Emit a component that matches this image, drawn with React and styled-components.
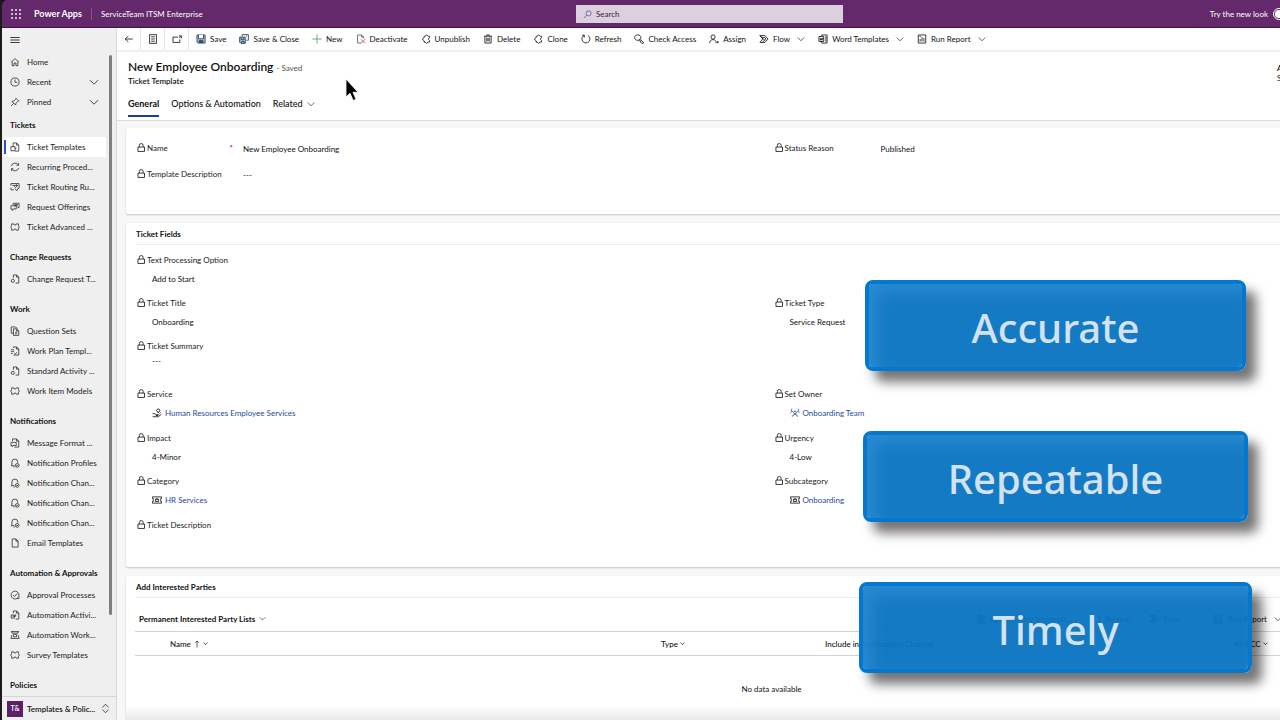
import { useState } from "react";
import styled, { createGlobalStyle } from "styled-components";

const GlobalStyle = createGlobalStyle`
  * {
    box-sizing: border-box;
  }
  body {
    margin: 0;
    overflow: hidden;
    font-family: Lato, "Noto Sans", sans-serif;
    font-size: 8px;
    line-height: 12px;
    color: #111;
    background-color: #111;
  }
  button, input {
    font: inherit;
    color: inherit;
  }
  h1, h2, h3, dl, dd, ul {
    margin: 0;
    padding: 0;
  }
`;

const Viewport = styled.div`
  position: relative;
  height: 100vh;
  overflow: hidden;
`;

/* the app window is a bit wider than the visible area */
const Shell = styled.div`
  width: 110vw;
  height: 100%;
  display: flex;
  flex-direction: column;
  border-left: 2px solid #1c1c1c;
`;

const TopBar = styled.header`
  flex: none;
  height: 28px;
  padding: 1px 0 0 9px;
  display: grid;
  grid-template-columns: 1fr 267px 1fr;
  align-items: center;
  background-color: #64296b;
  border-bottom: 1px solid #43114a;
  border-top-left-radius: 5px;
  color: white;
`;

const Brand = styled.div`
  display: flex;
  align-items: center;
  font-size: 8px;
`;

const AppName = styled.span`
  margin-left: 13px;
  padding-right: 9px;
  margin-right: 9px;
  border-right: 1px solid #86558c;
  font-size: 9px;
  font-weight: 700;
`;

const IconButton = styled.button`
  display: flex;
  align-items: center;
  justify-content: center;
  padding: 0;
  border: none;
  background: none;
  cursor: pointer;
`;

const SearchBox = styled.label`
  display: flex;
  align-items: center;
  gap: 4px;
  height: 18px;
  padding-left: 7px;
  background-color: #dccfde;
  color: #4a4fa8;

  input {
    flex: 1;
    border: none;
    padding: 0;
    background: none;
    outline: none;
    font-size: 8px;
    color: #3b2340;
  }
  input::placeholder {
    color: #3b2340;
    opacity: 1;
  }
`;

const NewLook = styled.label`
  display: flex;
  align-items: center;
  justify-content: flex-end;
  gap: 5px;
  padding-right: 110px;
`;

const Toggle = styled.input`
  appearance: none;
  display: flex;
  align-items: center;
  width: 25px;
  height: 12px;
  margin: 0;
  padding: 1px;
  border: 1px solid white;
  border-radius: 6px;

  &::before {
    content: "";
    width: 8px;
    height: 8px;
    border-radius: 50%;
    background-color: white;
  }
`;

const Body = styled.div`
  flex: 1;
  min-height: 0;
  display: flex;
`;

const Sidebar = styled.nav`
  flex: none;
  width: 115px;
  display: flex;
  flex-direction: column;
  background-color: #efefef;
  border-right: 1px solid #d8d8d8;
`;

const MenuButton = styled(IconButton)`
  width: 26px;
  height: 24px;
`;

const NavScroll = styled.div`
  flex: 1;
  min-height: 0;
  display: flex;
  justify-content: space-between;
  overflow: hidden;
`;

const NavList = styled.ul`
  width: 102px;
  margin-left: 2px;
  list-style: none;
`;

const GroupList = styled.ul`
  list-style: none;
`;

const Thumb = styled.div`
  width: 3px;
  height: 87%;
  margin: 3px 4px 0 0;
  border-radius: 2px;
  background-color: #7f7f7f;
`;

const NavHeading = styled.h2`
  height: ${(props) => (props.$first ? 25 : 32)}px;
  padding: ${(props) => (props.$first ? 7 : 14)}px 0 0 6px;
  font-size: 8px;
  font-weight: 700;
  line-height: 12px;
  white-space: nowrap;
`;

const NavLink = styled.a`
  display: flex;
  align-items: center;
  gap: 7px;
  height: 20px;
  padding-left: 4px;
  padding-right: 7px;
  border-left: 2px solid transparent;
  color: #222;
  text-decoration: none;
  background-color: ${(props) => (props.$active ? "white" : "transparent")};
  border-image: ${(props) =>
    props.$active
      ? "linear-gradient(white 20%, #2b50c8 20%, #2b50c8 80%, white 80%) 1"
      : "none"};

  span {
    flex: 1;
    white-space: nowrap;
  }
`;

const AreaSwitch = styled.button`
  display: flex;
  align-items: center;
  gap: 4px;
  height: 24px;
  padding: 0 0 0 5px;
  border: none;
  border-top: 1px solid #d6d6d6;
  background: none;
  font-weight: 600;
  white-space: nowrap;
`;

const AreaTile = styled.span`
  width: 16px;
  height: 16px;
  background-color: #5c2069;
  color: white;
  font-size: 7px;
  line-height: 15px;
`;

const AreaLabel = styled.span`
  width: 70px;
  text-align: left;
`;

const Main = styled.main`
  flex: 1;
  min-width: 0;
  display: flex;
  flex-direction: column;
  background-color: #f8f7f6;
`;

const CommandBar = styled.div`
  flex: none;
  display: flex;
  height: 24px;
  background-color: white;
  border-bottom: 2px solid #efefef;
`;

const SquareCommand = styled(IconButton)`
  width: 24px;
  border-right: 1px solid #e4e4e4;
`;

const Command = styled.button`
  display: flex;
  align-items: center;
  gap: 4px;
  padding: 0 6px 0 7px;
  border: none;
  background: none;
  white-space: nowrap;
  cursor: pointer;

  svg + span + svg {
    margin-left: 3px;
  }
`;

const RecordHeader = styled.section`
  flex: none;
  height: 69px;
  padding: 7px 0 0 11px;
  background-color: white;
  border-bottom: 1px solid #dcdcdc;
`;

const RecordTop = styled.div`
  display: flex;
  justify-content: space-between;
`;

const RecordTitle = styled.h1`
  font-size: 12px;
  font-weight: 600;
  line-height: 15px;
  color: #111;

  small {
    font-size: 8px;
    font-weight: 400;
    color: #555;
  }
`;

const RecordKind = styled.div`
  font-weight: 600;
  line-height: 10px;
`;

const HeaderStatus = styled.div`
  width: 131px;
  padding-top: 4px;
  line-height: 10px;

  strong {
    display: block;
    font-weight: 600;
  }
`;

const Tabs = styled.div`
  display: flex;
  gap: 12px;
  margin-top: 9px;
`;

const Tab = styled.button`
  display: flex;
  align-items: center;
  gap: 4px;
  height: 22px;
  padding: 0 0 3px;
  border: none;
  border-bottom: 2px solid ${(props) => (props.$active ? "#173f9f" : "transparent")};
  background: none;
  font-size: 9px;
  font-weight: ${(props) => (props.$active ? 700 : 500)};
`;

const Form = styled.div`
  flex: 1;
  min-height: 0;
  display: flex;
  flex-direction: column;
  gap: 9px;
  padding: 7px 0 0 9px;
`;

const Card = styled.section`
  flex: ${(props) => (props.$fill ? "1" : "none")};
  padding-left: 9px;
  padding-bottom: ${(props) => props.$bottom || 0}px;
  background: ${(props) =>
    props.$fill
      ? "linear-gradient(to top, #e6e6e6, white 16px)"
      : "white"};
  border-radius: 2px;
  box-shadow: 0 1px 2px rgba(0, 0, 0, 0.2);
`;

const CardTitle = styled.h2`
  height: 22px;
  margin-left: 1px;
  border-bottom: 1px solid #ececec;
  font-size: 8px;
  font-weight: 700;
  line-height: 22px;
`;

const FieldGrid = styled.dl`
  display: grid;
  grid-template-columns: 1fr 1fr;
  column-gap: 4px;
  padding: ${(props) => props.$top}px 0 0 2px;
`;

const InlineField = styled.div`
  grid-column: ${(props) => props.$col || 1};
  display: flex;
  align-items: center;
  height: 26px;

  dt {
    display: flex;
    align-items: center;
    width: 106px;
    padding-right: 10px;
    color: #222;
  }
  dd {
    padding-top: 2px;
  }
  em {
    margin-left: auto;
    color: #c4262e;
    font-style: normal;
    font-weight: 700;
  }
`;

const fieldHeights = { text: 43, empty: 48, link: 44 };

const StackedField = styled.div`
  grid-column: ${(props) => props.$col || 1};
  height: ${(props) => fieldHeights[props.$kind]}px;

  dt {
    display: flex;
    align-items: center;
    height: 18px;
    color: #222;
  }
  dd {
    display: flex;
    align-items: center;
    gap: 3px;
    height: ${(props) => (props.$kind === "empty" ? 12 : 20)}px;
    padding-left: 15px;
  }
  a {
    color: #1e4a9c;
    text-decoration: none;
  }
`;

const GridBar = styled.div`
  display: flex;
  align-items: center;
  justify-content: space-between;
  height: 33px;
  padding: 8px 120px 0 4px;
`;

const ViewPicker = styled.button`
  display: flex;
  align-items: center;
  gap: 4px;
  padding: 0;
  border: none;
  background: none;
  font-weight: 700;
`;

const GridCommands = styled.div`
  display: flex;
  gap: 5px;
`;

const PartyTable = styled.table`
  width: 100%;
  table-layout: fixed;
  border-collapse: collapse;

  th {
    height: 24px;
    padding: 0;
    border-top: 1px solid #d4d4d4;
    border-bottom: 1px solid #d4d4d4;
    font-weight: 500;
    text-align: left;
    white-space: nowrap;
  }
  td {
    height: 66px;
    padding: 0;
    text-align: center;
  }
`;

const Sorter = styled.button`
  display: flex;
  align-items: center;
  gap: 2px;
  padding: 0;
  border: none;
  background: none;
  font-weight: 500;
`;

const Callouts = styled.div`
  position: absolute;
  top: 280px;
  right: 28px;
  display: flex;
  flex-direction: column;
  align-items: center;
  gap: 60px;
`;

const Callout = styled.div`
  display: flex;
  align-items: center;
  justify-content: center;
  width: ${(props) => props.$width}px;
  height: 91px;
  padding-top: 4px;
  border: 4px solid #0478cf;
  border-radius: 8px;
  background-color: rgba(8, 115, 193, 0.95);
  background-clip: padding-box;
  box-shadow: 10px 11px 12px rgba(0, 0, 0, 0.55),
    inset 8px 8px 16px rgba(70, 165, 230, 0.4);
  color: #d3e2f1;
  font-family: "Noto Sans", sans-serif;
  font-size: 40px;
  font-weight: 500;
  line-height: 48px;
`;

const Pointer = styled.svg`
  position: absolute;
  left: 345px;
  top: 78px;
`;

const icons = {
  home: "M2 8L8 2.5L14 8M3.5 7V14H6.5V9.5H9.5V14H12.5V7",
  clock: "M8 1.5A6.5 6.5 0 1 0 8 14.5A6.5 6.5 0 1 0 8 1.5M8 4V8.5H11.5",
  pin: "M9.5 2L14 6.5L12.5 7L9.5 10L9 13L3 7L6 6.5L9 3.5ZM6 10L1.5 14.5",
  template: "M5 5V1.5H10.5L14 5V14.5H8M10.5 1.5V5H14M1.5 7.5H8V14H1.5ZM5 7.5V5M8 10H10.5",
  cycle: "M2 6.5A6.3 6.3 0 0 1 13.5 5M13.7 1.8V5.2H10.4M14 9.5A6.3 6.3 0 0 1 2.5 11M2.3 14.2V10.8H5.6",
  routing: "M1.5 6V2.5H14.5V10H12M1.5 9V12.5H6M4 5.5H12L9.5 3.7M12 5.5L9 9L6 6.5M8 10.5L10.5 14L12.5 11",
  offering: "M5 5V2H14.5V9H12M7 4H12.5M7 6H12.5M1.5 6H10V11H5.5L3.5 13.5V11H1.5Z",
  puzzle: "M2.5 3H6A2 1.8 0 0 0 10 3H13.5V6L15 8L13.5 10V13H10A2 1.8 0 0 0 6 13H2.5V10L1 8L2.5 6Z",
  copy: "M5.5 4.5H10.5L14 8V15H5.5ZM10.5 4.5V8H14M5.5 11.5H2V1.5H9L11.5 4M8 10H11.5M8 12.5H11.5",
  plan: "M5.5 3V1.5H10.5L14 5V14.5H5.5M10.5 1.5V5H14M1.5 6H6.5M1.5 9H6.5M1.5 12H4M7 12L8.5 13L11 10",
  activity: "M5.5 6V1.5H10.5L14 5V14.5H9M10.5 1.5V5H14M4.5 8.5A2.5 2.5 0 1 0 4.5 13.5A2.5 2.5 0 1 0 4.5 8.5",
  message: "M4 5V1.5H10.5L14 5V14.5H7M10.5 1.5V5H14M1.5 7H10V12H5L3.5 14V12H1.5Z",
  bell: "M3 12V6.5A4.7 4.7 0 0 1 12.5 6.5V7.5M1.5 12.3H7M5.5 14.3H7.5M11.5 8.8A3 3 0 1 0 11.5 14.8A3 3 0 1 0 11.5 8.8M10 12L11.2 13L13 11",
  page: "M3.5 1.5H9.5L13 5V14.5H3.5ZM9.5 1.5V5H13",
  approve: "M12.5 12.5A6.3 6.3 0 1 1 14.3 8V13.5H11M4.8 8L7.2 10.3L11.5 5.5",
  flowPage: "M5.5 5V1.5H10.5L14 5V14.5H9M10.5 1.5V5H14M2 8H7V13H2ZM4 10H9V7",
  work: "M1.5 2.5H14.5M3 2.5V5H13V2.5M5.5 7H10.5V11H5.5ZM3 8L1.5 13.5H14.5L13 8",
  menu: "M0.5 4H15.5M0.5 8H15.5M0.5 12H15.5",
  back: "M14 8H2M7 3L2 8L7 13",
  record: "M2.5 1H13.5V15H2.5ZM5 4.5H11M5 8H11M5 11.5H11",
  popout: "M9.5 5H1.5V13.5H12.5V8.5M11 3H15V7M15 3L11.5 6.5",
  doc: "M8 14.5H2.5V1.5H9L12.5 5V7M9 1.5V5H12.5",
  trash: "M1.5 3.5H14.5M6 3.5V1.5H10V3.5M3 3.5V14.5H13V3.5M6 6V12M8 6V12M10 6V12",
  publish: "M5 3.5H6.5L9 1.5L11.5 3.5H13.5V6.2L11.5 8.2L13.5 10.2V13H11.5L9 15L6.5 13H5V10.8L2 8.2L5 5.8Z",
  refresh: "M5 2.2A6.4 6.4 0 1 0 11 2.3M1.8 2H5.3V5.5",
  key: "M6 1.5A4.3 4.3 0 1 0 6 10A4.3 4.3 0 1 0 6 1.5M8.5 8L14.8 13V15H12.5L10.5 13V11.5H9L7.5 10",
  assign: "M6.5 1.5A3.3 3.3 0 1 0 6.5 8.2A3.3 3.3 0 1 0 6.5 1.5M1 14.5A5.6 5.6 0 0 1 10.5 10.5M9.5 13H15M13 11L15 13L13 15",
  flow: "M1.5 2.5H9.5L14.5 8L9.5 13.5H1.5L6 8ZM5 5.5H9L11 8L5.5 13M1.5 2.5L9.5 10.5",
  word: "M6 3.5V1.5H14.5V14.5H6V12.5M1.5 4H9V12H1.5ZM3 6L4.2 10L5.3 7L6.3 10L7.5 6M11 5H14M11 8H14M11 11H14",
  report: "M2 1.5H14V14.5H2ZM5 12V8M8 12V5M11 12V6.5M4 4H6",
  plus: "M8 0.5V15.5M0.5 8H15.5",
  search: "M10 1.5A4.5 4.5 0 1 0 10 10.5A4.5 4.5 0 1 0 10 1.5M6.7 9.2L1.5 14.5",
  chevron: "M1.5 5L8 11.5L14.5 5",
  updown: "M2.5 6L8 0.5L13.5 6M2.5 10L8 15.5L13.5 10",
  up: "M8 15V2M4.5 5.5L8 2L11.5 5.5",
  lock: "M1.5 6.5H12V13.5H1.5ZM3.8 6.5V3.8A3 3 0 0 1 9.8 3.8V6.5",
  service: "M10 1.5A2.5 2.5 0 1 0 10 6.5A2.5 2.5 0 1 0 10 1.5M10 6.5V8M1 9H4L7 10.5H10V12H6M1 14H10L15 10M12 8.5L14 7",
  team: "M3.5 1.5A1.5 1.5 0 1 0 3.5 4.5M12.5 1.5A1.5 1.5 0 1 1 12.5 4.5M1 7.5C1.5 5.5 4 5 5 6.5M15 7.5C14.5 5.5 12 5 11 6.5M8 5A2.2 2.2 0 1 0 8 9.4A2.2 2.2 0 1 0 8 5M3.5 14A4.6 4.6 0 0 1 12.5 14",
  category: "M0.5 3H15.5V5.5H14V10.5H15.5V13H0.5V10.5H2V5.5H0.5ZM5.5 6.5H10.5V10.5H5.5ZM8 5V8.5",
};

const Icon = ({ name, size = 10, stroke = 1.3, color = "currentColor" }) => (
  <svg
    width={size}
    height={size}
    viewBox="0 0 16 16"
    fill="none"
    stroke={color}
    strokeWidth={stroke}
    aria-hidden="true"
  >
    <path d={icons[name]} />
  </svg>
);

const Waffle = () => (
  <svg width="10" height="10" viewBox="0 0 10 10" fill="white" aria-hidden="true">
    {[1, 5, 9].map((y) =>
      [1, 5, 9].map((x) => <circle key={`${x}-${y}`} cx={x} cy={y} r="0.9" />)
    )}
  </svg>
);

const SaveIcon = ({ closing }) => (
  <svg width="10" height="10" viewBox="0 0 16 16" fill="none" stroke="#34506e" strokeWidth="1.5" aria-hidden="true">
    {closing ? (
      <>
        <path d="M5 4V1H15V10H12" />
        <path d="M1 5H10V15H3L1 13Z" fill="#a9bccd" />
        <path d="M3.5 5V9H8V5M4 15V12H8V15M11 4L13 3" />
      </>
    ) : (
      <>
        <path d="M1.5 1.5H14.5V14.5H3.5L1.5 12.5Z" fill="#a9bccd" />
        <path d="M4 1.5V7.5H12V1.5" fill="white" />
        <path d="M5 14.5V10.5H11V14.5" fill="#34506e" />
      </>
    )}
  </svg>
);

const DeactivateIcon = () => (
  <svg width="10" height="10" viewBox="0 0 16 16" fill="none" stroke="#555" strokeWidth="1.3" aria-hidden="true">
    <path d={icons.doc} />
    <path d="M8 8.5L14.5 15M14.5 8.5L8 15" stroke="#c0444c" />
  </svg>
);

const mainLinks = [
  { icon: "home", label: "Home" },
  { icon: "clock", label: "Recent", expand: true },
  { icon: "pin", label: "Pinned", expand: true },
];

const navGroups = [
  {
    title: "Tickets",
    links: [
      { icon: "template", label: "Ticket Templates", active: true },
      { icon: "cycle", label: "Recurring Proced..." },
      { icon: "routing", label: "Ticket Routing Ru..." },
      { icon: "offering", label: "Request Offerings" },
      { icon: "puzzle", label: "Ticket Advanced ..." },
    ],
  },
  {
    title: "Change Requests",
    links: [{ icon: "activity", label: "Change Request T..." }],
  },
  {
    title: "Work",
    links: [
      { icon: "copy", label: "Question Sets" },
      { icon: "plan", label: "Work Plan Templ..." },
      { icon: "activity", label: "Standard Activity ..." },
      { icon: "puzzle", label: "Work Item Models" },
    ],
  },
  {
    title: "Notifications",
    links: [
      { icon: "message", label: "Message Format ..." },
      { icon: "bell", label: "Notification Profiles" },
      { icon: "bell", label: "Notification Chan..." },
      { icon: "bell", label: "Notification Chan..." },
      { icon: "bell", label: "Notification Chan..." },
      { icon: "page", label: "Email Templates" },
    ],
  },
  {
    title: "Automation & Approvals",
    links: [
      { icon: "approve", label: "Approval Processes" },
      { icon: "flowPage", label: "Automation Activi..." },
      { icon: "work", label: "Automation Work..." },
      { icon: "puzzle", label: "Survey Templates" },
    ],
  },
  { title: "Policies", links: [] },
];

const commands = [
  { label: "Save", custom: <SaveIcon /> },
  { label: "Save & Close", custom: <SaveIcon closing /> },
  { label: "New", icon: "plus", color: "#4f9a62" },
  { label: "Deactivate", custom: <DeactivateIcon /> },
  { label: "Unpublish", icon: "publish" },
  { label: "Delete", icon: "trash" },
  { label: "Clone", icon: "publish" },
  { label: "Refresh", icon: "refresh" },
  { label: "Check Access", icon: "key" },
  { label: "Assign", icon: "assign" },
  { label: "Flow", icon: "flow", menu: true },
  { label: "Word Templates", icon: "word", menu: true },
  { label: "Run Report", icon: "report", menu: true },
];

const gridCommands = [
  { label: "Add Existing Intereste...", icon: "trash" },
  { label: "Refresh", icon: "refresh" },
  { label: "Flow", icon: "flow", menu: true },
  { label: "Run Report", icon: "report", menu: true },
];

const ticketFields = [
  { label: "Text Processing Option", value: "Add to Start", kind: "text" },
  { label: "Ticket Title", value: "Onboarding", kind: "text" },
  { label: "Ticket Type", value: "Service Request", kind: "text", col: 2 },
  { label: "Ticket Summary", value: "---", kind: "empty" },
  { label: "Service", value: "Human Resources Employee Services", kind: "link", icon: "service" },
  { label: "Set Owner", value: "Onboarding Team", kind: "link", icon: "team", col: 2 },
  { label: "Impact", value: "4-Minor", kind: "text" },
  { label: "Urgency", value: "4-Low", kind: "text", col: 2 },
  { label: "Category", value: "HR Services", kind: "link", icon: "category" },
  { label: "Subcategory", value: "Onboarding", kind: "link", icon: "category", col: 2 },
  { label: "Ticket Description", value: "", kind: "text" },
];

const NavItem = ({ icon, label, active, expand }) => (
  <li>
    <NavLink href="#" $active={active}>
      <Icon name={icon} stroke={1.2} />
      <span>{label}</span>
      {expand && <Icon name="chevron" />}
    </NavLink>
  </li>
);

const CommandItem = ({ label, icon, custom, color, menu }) => (
  <Command type="button">
    {custom || <Icon name={icon} color={color} />}
    <span>{label}</span>
    {menu && <Icon name="chevron" size={8} />}
  </Command>
);

const Locked = ({ children }) => (
  <>
    <Icon name="lock" stroke={1.4} />
    {children}
  </>
);

const App = () => {
  const [tab, setTab] = useState("General");
  const [newLook, setNewLook] = useState(false);

  return (
    <Viewport>
      <GlobalStyle />
      <Shell>
        <TopBar>
          <Brand>
            <IconButton type="button" aria-label="App launcher">
              <Waffle />
            </IconButton>
            <AppName>Power Apps</AppName>
            <span>ServiceTeam ITSM Enterprise</span>
          </Brand>
          <SearchBox>
            <Icon name="search" size={9} />
            <input type="search" placeholder="Search" aria-label="Search" />
          </SearchBox>
          <NewLook>
            Try the new look
            <Toggle
              type="checkbox"
              checked={newLook}
              onChange={(e) => setNewLook(e.target.checked)}
            />
          </NewLook>
        </TopBar>
        <Body>
          <Sidebar>
            <MenuButton type="button" aria-label="Menu">
              <Icon name="menu" />
            </MenuButton>
            <NavScroll>
              <NavList>
                {mainLinks.map((link) => (
                  <NavItem key={link.label} {...link} />
                ))}
                {navGroups.map((group, i) => (
                  <li key={group.title}>
                    <NavHeading $first={i === 0}>{group.title}</NavHeading>
                    <GroupList>
                      {group.links.map((link, n) => (
                        <NavItem key={n} {...link} />
                      ))}
                    </GroupList>
                  </li>
                ))}
              </NavList>
              <Thumb />
            </NavScroll>
            <AreaSwitch type="button">
              <AreaTile>T&amp;</AreaTile>
              <AreaLabel>Templates &amp; Polic...</AreaLabel>
              <Icon name="updown" size={9} />
            </AreaSwitch>
          </Sidebar>
          <Main>
            <CommandBar>
              <SquareCommand type="button" aria-label="Back">
                <Icon name="back" />
              </SquareCommand>
              <SquareCommand type="button" aria-label="Record list">
                <Icon name="record" />
              </SquareCommand>
              <SquareCommand type="button" aria-label="Open in new window">
                <Icon name="popout" />
              </SquareCommand>
              {commands.map((command) => (
                <CommandItem key={command.label} {...command} />
              ))}
            </CommandBar>
            <RecordHeader>
              <RecordTop>
                <div>
                  <RecordTitle>
                    New Employee Onboarding <small>- Saved</small>
                  </RecordTitle>
                  <RecordKind>Ticket Template</RecordKind>
                </div>
                <HeaderStatus>
                  <strong>Active</strong>
                  Status
                </HeaderStatus>
              </RecordTop>
              <Tabs>
                {["General", "Options & Automation", "Related"].map((name) => (
                  <Tab
                    key={name}
                    type="button"
                    $active={tab === name}
                    onClick={() => setTab(name)}
                  >
                    {name}
                    {name === "Related" && <Icon name="chevron" size={8} />}
                  </Tab>
                ))}
              </Tabs>
            </RecordHeader>
            <Form>
              <Card $bottom={27}>
                <FieldGrid $top={7}>
                  <InlineField>
                    <dt>
                      <Locked>Name</Locked>
                      <em>*</em>
                    </dt>
                    <dd>New Employee Onboarding</dd>
                  </InlineField>
                  <InlineField $col={2}>
                    <dt>
                      <Locked>Status Reason</Locked>
                    </dt>
                    <dd>Published</dd>
                  </InlineField>
                  <InlineField>
                    <dt>
                      <Locked>Template Description</Locked>
                    </dt>
                    <dd>---</dd>
                  </InlineField>
                </FieldGrid>
              </Card>
              <Card $bottom={8}>
                <CardTitle>Ticket Fields</CardTitle>
                <FieldGrid $top={6}>
                  {ticketFields.map((field) => (
                    <StackedField key={field.label} $kind={field.kind} $col={field.col}>
                      <dt>
                        <Locked>{field.label}</Locked>
                      </dt>
                      <dd>
                        {field.icon && (
                          <Icon
                            name={field.icon}
                            color={field.icon === "team" ? "#1e4a9c" : undefined}
                          />
                        )}
                        {field.kind === "link" ? <a href="#">{field.value}</a> : field.value}
                      </dd>
                    </StackedField>
                  ))}
                </FieldGrid>
              </Card>
              <Card $fill>
                <CardTitle>Add Interested Parties</CardTitle>
                <GridBar>
                  <ViewPicker type="button">
                    Permanent Interested Party Lists
                    <Icon name="chevron" size={7} />
                  </ViewPicker>
                  <GridCommands>
                    {gridCommands.map((command) => (
                      <CommandItem key={command.label} {...command} />
                    ))}
                  </GridCommands>
                </GridBar>
                <PartyTable>
                  <colgroup>
                    <col width="35" />
                    <col />
                    <col width="164" />
                    <col width="409" />
                    <col width="174" />
                  </colgroup>
                  <thead>
                    <tr>
                      <th aria-label="Select" />
                      <th>
                        <Sorter type="button">
                          Name
                          <Icon name="up" size={8} />
                          <Icon name="chevron" size={5} stroke={2.4} />
                        </Sorter>
                      </th>
                      {["Type", "Include in Notification Channel", "As BCC"].map((name) => (
                        <th key={name}>
                          <Sorter type="button">
                            {name}
                            <Icon name="chevron" size={5} stroke={2.4} />
                          </Sorter>
                        </th>
                      ))}
                    </tr>
                  </thead>
                  <tbody>
                    <tr>
                      <td colSpan={5}>No data available</td>
                    </tr>
                  </tbody>
                </PartyTable>
              </Card>
            </Form>
          </Main>
        </Body>
      </Shell>
      <Callouts>
        <Callout $width={381}>Accurate</Callout>
        <Callout $width={385}>Repeatable</Callout>
        <Callout $width={393}>Timely</Callout>
      </Callouts>
      <Pointer width="14" height="25" viewBox="0 0 14 25" aria-hidden="true">
        <path
          d="M1 1V19L5 15.3L8.2 22.5L11 21.2L8 14.3H13Z"
          fill="black"
          stroke="white"
          strokeWidth="0.8"
        />
      </Pointer>
    </Viewport>
  );
};

export default App;
